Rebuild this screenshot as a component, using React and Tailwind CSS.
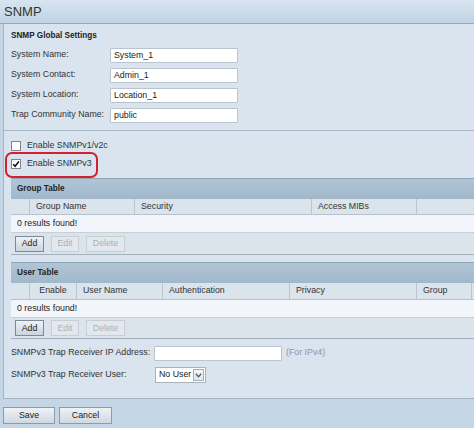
import React from "react";

const F = "font-['Liberation_Sans',Arial,sans-serif]";

function Checkbox({ checked }) {
  return (
    <svg width="10" height="10" viewBox="0 0 10 10" className="shrink-0">
      <rect x="0.5" y="0.5" width="9" height="9" fill="#ffffff" stroke="#7d858e" />
      {checked && (
        <path d="M2.2 5.2 L4.1 7.2 L7.9 2.6" fill="none" stroke="#111" strokeWidth="1.6" />
      )}
    </svg>
  );
}

function TextInput({ value, w }) {
  return (
    <div
      className={`h-[15px] ${w} bg-white border border-[#b9c4ce] rounded-[1px] flex items-center pl-[3px] text-[8.8px] text-[#222] leading-none`}
    >
      {value}
    </div>
  );
}

function Btn({ children, disabled, w }) {
  return (
    <div
      className={`h-[16px] ${w} flex items-center justify-center text-[8.8px] leading-none border ${
        disabled
          ? "border-[#c6ced6] bg-[#e2e8ee] text-[#a9b1b9]"
          : "border-[#7e8b97] bg-gradient-to-b from-[#eef2f5] to-[#cbd4dc] text-[#222]"
      }`}
    >
      {children}
    </div>
  );
}

function Table({ title, cols, colH, btnH }) {
  return (
    <div className="w-[470px] border-b border-[#a2b1bf]">
      <div className="h-[21px] border-t border-[#8fa5b8] bg-gradient-to-b from-[#b0c5d6] to-[#a1b8cb] flex items-center pl-[6px] text-[8.2px] font-bold text-[#222]">
        {title}
      </div>
      <div className={`${colH} bg-[#dbe3eb] border-b border-[#b6c3ce] flex text-[8.8px] text-[#333]`}>
        {cols.map((c, i) => (
          <div
            key={i}
            className={`${c.w} h-full flex items-center border-r border-[#b9c5d0] ${
              c.center ? "justify-center" : "pl-[6px]"
            } shrink-0`}
          >
            {c.label}
          </div>
        ))}
      </div>
      <div className="h-[18px] bg-[#f2f5f9] border-b border-[#c6d0d9] flex items-center pl-[6px] text-[8.8px] text-[#222]">
        0 results found!
      </div>
      <div className={`${btnH} bg-[#dce4eb] flex items-center pl-[4px] gap-[7px]`}>
        <Btn w="w-[29px]">Add</Btn>
        <Btn w="w-[28px]" disabled>Edit</Btn>
        <Btn w="w-[39px]" disabled>Delete</Btn>
      </div>
    </div>
  );
}

export default function App() {
  const rows = [
    ["System Name:", "System_1"],
    ["System Contact:", "Admin_1"],
    ["System Location:", "Location_1"],
    ["Trap Community Name:", "public"],
  ];
  return (
    <div className={`relative w-[474px] h-[428px] overflow-hidden bg-[#c4d6e6] ${F}`}>
      {/* Title bar */}
      <div className="h-[24px] border-b border-[#98abbd] bg-gradient-to-b from-[#d8e5f0] to-[#c0d3e4] pl-[4px] flex items-center">
        <span className="text-[13px] text-[#333] leading-none">SNMP</span>
      </div>

      {/* Panel */}
      <div className="ml-[3px] h-[375px] border-l border-b border-[#a3b4c3] bg-[#d9e4ee] overflow-hidden">
        {/* Global settings */}
        <div className="h-[107px] border-b border-[#a9b8c6] pl-[7px] pt-[6px]">
          <div className="h-[12px] flex items-center text-[8.2px] font-bold text-[#222]">
            SNMP Global Settings
          </div>
          <div className="mt-[3px] flex flex-col">
            {rows.map(([l, v]) => (
              <div key={l} className="h-[20px] flex items-center">
                <div className="w-[99px] text-[8.8px] text-[#333]">{l}</div>
                <TextInput value={v} w="w-[128px]" />
              </div>
            ))}
          </div>
        </div>

        {/* SNMP versions + tables */}
        <div className="pl-[7px] pt-[6px]">
          <div className="h-[18px] flex items-center gap-[6px] text-[8.8px] text-[#333]">
            <Checkbox />
            <span>Enable SNMPv1/v2c</span>
          </div>
          <div className="h-[18px] flex items-center gap-[6px] text-[8.8px] text-[#333]">
            <Checkbox checked />
            <span>Enable SNMPv3</span>
          </div>

          <div className="mt-[5px]">
            <Table
              title="Group Table"
              colH="h-[16px]"
              btnH="h-[21px]"
              cols={[
                { w: "w-[19px]", label: "" },
                { w: "w-[105px]", label: "Group Name" },
                { w: "w-[177px]", label: "Security" },
                { w: "w-[105px]", label: "Access MIBs" },
                { w: "w-[64px]", label: "" },
              ]}
            />
          </div>

          <div className="mt-[7px]">
            <Table
              title="User Table"
              colH="h-[17px]"
              btnH="h-[20px]"
              cols={[
                { w: "w-[19px]", label: "" },
                { w: "w-[47px]", label: "Enable", center: true },
                { w: "w-[86px]", label: "User Name" },
                { w: "w-[127px]", label: "Authentication" },
                { w: "w-[127px]", label: "Privacy" },
                { w: "w-[55px]", label: "Group" },
              ]}
            />
          </div>

          <div className="mt-[4px] h-[20px] flex items-center text-[8.8px] text-[#333]">
            <div className="w-[143px]">SNMPv3 Trap Receiver IP Address:</div>
            <TextInput value="" w="w-[128px]" />
            <span className="ml-[4px] text-[#8d97a1]">(For IPv4)</span>
          </div>
          <div className="mt-[2px] h-[20px] flex items-center text-[8.8px] text-[#333]">
            <div className="w-[144px]">SNMPv3 Trap Receiver User:</div>
            <div className="h-[16px] w-[51px] bg-white border border-[#a9b3bc] flex items-center">
              <span className="pl-[3px] flex-1 text-[#222]">No User</span>
              <div className="h-[12px] w-[11px] mr-[1px] border border-[#a4afba] bg-gradient-to-b from-[#f4f7fa] to-[#dfe6ed] flex items-center justify-center">
                <svg width="7" height="5" viewBox="0 0 7 5">
                  <path d="M0.8 0.8 L3.5 3.8 L6.2 0.8" fill="none" stroke="#4a5f78" strokeWidth="1.3" />
                </svg>
              </div>
            </div>
          </div>
        </div>
      </div>

      {/* Footer */}
      <div className="pt-[8px] pl-[3px] flex gap-[4px]">
        <div className="h-[17px] w-[52px] border border-[#8e9aa6] bg-gradient-to-b from-[#eef2f5] to-[#d0d8e0] flex items-center justify-center text-[8.8px] text-[#222]">
          Save
        </div>
        <div className="h-[17px] w-[53px] border border-[#8e9aa6] bg-gradient-to-b from-[#eef2f5] to-[#d0d8e0] flex items-center justify-center text-[8.8px] text-[#222]">
          Cancel
        </div>
      </div>

      {/* Red annotation */}
      <div className="absolute left-[5px] top-[152px] w-[93px] h-[26px] border-2 border-[#d3222f] rounded-[7px]" />
    </div>
  );
}
